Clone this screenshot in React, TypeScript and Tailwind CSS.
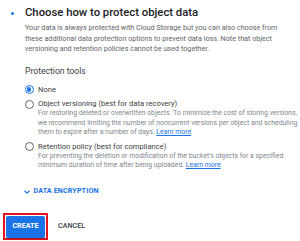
import React from "react";

function Radio({ checked }: { checked?: boolean }) {
  return (
    <div
      className={
        "w-[9px] h-[9px] rounded-full border-[1.3px] flex items-center justify-center shrink-0 " +
        (checked ? "border-[#1a73e8]" : "border-[#5f6368]")
      }
    >
      {checked && <div className="w-[4.5px] h-[4.5px] rounded-full bg-[#1a73e8]" />}
    </div>
  );
}

export default function App() {
  return (
    <div className="w-[300px] h-[241px] bg-white overflow-hidden font-['Roboto',sans-serif] text-[#202124]">
      <div className="flex items-center h-[14px] mt-[6px]">
        <div className="w-[3.5px] h-[3.5px] rounded-full bg-[#1a73e8] ml-[10.5px] mt-[1px]" />
        <div className="ml-[11px] text-[11.3px] font-medium leading-[14px] whitespace-nowrap">
          Choose how to protect object data
        </div>
      </div>
      <div className="pl-[25px] mt-[3.25px] text-[7.2px] leading-[10.5px] text-[#5f6368] whitespace-nowrap">
        <div>Your data is always protected with Cloud Storage but you can also choose from</div>
        <div>these additional data protection options to prevent data loss. Note that object</div>
        <div>versioning and retention policies cannot be used together.</div>
      </div>
      <div className="pl-[25px] mt-[9.75px] text-[8.6px] leading-[12px] text-[#3c4043]">Protection tools</div>

      <div className="pl-[24.5px] mt-[8px] flex items-center h-[10px]">
        <Radio checked />
        <div className="ml-[4.5px] text-[7.6px] text-[#3c4043]">None</div>
      </div>

      <div className="pl-[24.5px] mt-[4.5px] flex items-center h-[10px]">
        <Radio />
        <div className="ml-[4.5px] text-[7.6px] text-[#3c4043] whitespace-nowrap">Object versioning (best for data recovery)</div>
      </div>
      <div className="pl-[38px] mt-[0.4px] text-[6.9px] leading-[9.3px] text-[#80868b] whitespace-nowrap">
        <div>For restoring deleted or overwritten objects. To minimize the cost of storing versions,</div>
        <div>we recommend limiting the number of noncurrent versions per object and scheduling</div>
        <div>
          them to expire after a number of days. <span className="text-[#1a73e8] underline">Learn more</span>
        </div>
      </div>

      <div className="pl-[24.5px] mt-[4.5px] flex items-center h-[10px]">
        <Radio />
        <div className="ml-[4.5px] text-[7.6px] text-[#3c4043] whitespace-nowrap">Retention policy (best for compliance)</div>
      </div>
      <div className="pl-[38px] text-[6.9px] leading-[9.3px] text-[#80868b] whitespace-nowrap">
        <div>For preventing the deletion or modification of the bucket's objects for a specified</div>
        <div>
          minimum duration of time after being uploaded. <span className="text-[#1a73e8] underline">Learn more</span>
        </div>
      </div>

      <div className="pl-[24px] mt-[16.5px] flex items-center h-[10px] text-[#1a73e8]">
        <svg width="6" height="4" viewBox="0 0 6 4" fill="none" stroke="#1a73e8" strokeWidth="1.3">
          <path d="M0.5 0.6 L3 3.1 L5.5 0.6" />
        </svg>
        <div className="ml-[3.5px] text-[7.2px] font-bold tracking-[0.1px]">DATA ENCRYPTION</div>
      </div>

      <div className="flex items-center mt-[16.5px]">
        <div className="ml-[3px] w-[45px] h-[27px] border-[2px] border-[#e0141e] flex items-center justify-center">
          <div className="w-[39px] h-[22px] bg-[#1a73e8] rounded-[2px] flex items-center justify-center text-white text-[7.2px] font-bold shadow-[0_1px_1px_rgba(0,0,0,0.25)]">
            CREATE
          </div>
        </div>
        <div className="ml-[10px] text-[7.2px] font-medium text-[#3c4043]">CANCEL</div>
      </div>
    </div>
  );
}
